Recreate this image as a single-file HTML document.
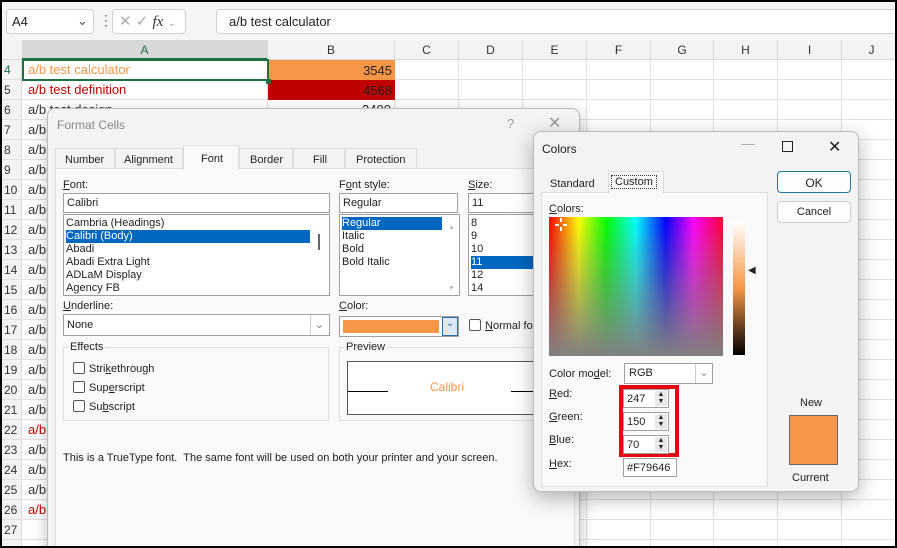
<!DOCTYPE html>
<html><head><style>
*{box-sizing:border-box;margin:0;padding:0}
body{width:897px;height:548px;overflow:hidden;background:#000;font-family:"Liberation Sans",sans-serif;font-size:12px;color:#222;position:relative}
.a{position:absolute}
#frame{left:2px;top:2px;width:893px;height:544px;background:#fff;overflow:hidden}
.u{text-decoration:underline}
.inp{position:absolute;background:#fff;border:1px solid #a0a0a0;padding:1px 3px;font-size:11px;white-space:nowrap;overflow:hidden}
.lbl{position:absolute;font-size:11px}
.cb{position:absolute;width:12px;height:12px;border:1px solid #555;border-radius:2px;background:#fff}
</style></head><body>
<div id="frame" class="a">
<div class="a" style="left:0;top:0;width:893px;height:38px;background:#f5f5f5"></div>
<div class="a" style="left:4px;top:7px;width:88px;height:25px;background:#fff;border:1px solid #d0d0d0;border-radius:4px;font-size:13px;padding:4px 5px">A4<span class="a" style="left:70px;top:3px;color:#555">⌄</span></div>
<div class="a" style="left:97px;top:10px;color:#666;font-size:14px">⋮</div>
<div class="a" style="top:7px;width:74px;height:25px;background:#fff;border:1px solid #d0d0d0;border-radius:4px;left:110px;color:#aaa;font-size:15px;padding:2px 6px">✕ ✓ <i style="font-family:'Liberation Serif';color:#333">fx</i> <span style="font-size:10px">⌄</span></div>
<div class="a" style="top:7px;width:690px;height:25px;background:#fff;border:1px solid #d0d0d0;border-radius:4px;font-size:13px;padding:4px 12px;color:#222;left:214px">a/b test calculator</div>
<div class="a" style="left:0;top:38px;width:893px;height:20px;background:#f3f3f3;border-bottom:1px solid #d8d8d8"></div>
<div class="a" style="left:20px;top:38px;width:246px;height:20px;background:#d8d8d8;border-bottom:2px solid #1e7145"></div>
<div class="a" style="left:0;top:58px;width:20px;height:490px;background:#f3f3f3;border-right:1px solid #d8d8d8"></div>
<div id="grid"></div>
<div class="a" style="left:266px;top:58px;width:127px;height:20px;background:#f79646;text-align:right;padding:3px 3px;font-size:13px">3545</div>
<div class="a" style="left:266px;top:78px;width:127px;height:20px;background:#c00000;text-align:right;padding:3px 3px;font-size:13px">4568</div>
<div class="a" style="left:20px;top:57px;width:247px;height:22px;border:2px solid #1e7145"></div>
<div class="a" style="left:264px;top:77px;width:5px;height:5px;background:#1e7145"></div>

<div class="a" style="left:45px;top:106px;width:533px;height:445px;background:#f3f3f3;border:1px solid #bbb;border-radius:8px;box-shadow:0 4px 16px rgba(0,0,0,.25)"></div>
<div class="a" style="left:55px;top:116px;color:#888;font-size:12px">Format Cells</div>
<div class="a" style="left:505px;top:114px;color:#999;font-size:13px">?</div>
<div class="a" style="left:546px;top:111px;color:#999;font-size:16px">✕</div>
<div class="a" style="left:53px;top:166px;width:520px;height:390px;background:#f9f9f9;border:1px solid #ddd"></div>
<div class="a" style="left:53px;top:146px;width:60px;height:21px;border:1px solid #ddd;border-bottom:none;font-size:11px;padding:5px 0 0 9px">Number</div>
<div class="a" style="left:113px;top:146px;width:68px;height:21px;border:1px solid #ddd;border-bottom:none;font-size:11px;padding:5px 0 0 8px">Alignment</div>
<div class="a" style="left:181px;top:143px;width:56px;height:25px;border:1px solid #ddd;border-bottom:none;background:#f9f9f9;font-size:11px;padding:7px 0 0 17px">Font</div>
<div class="a" style="left:237px;top:146px;width:54px;height:21px;border:1px solid #ddd;border-bottom:none;font-size:11px;padding:5px 0 0 10px">Border</div>
<div class="a" style="left:291px;top:146px;width:52px;height:21px;border:1px solid #ddd;border-bottom:none;font-size:11px;padding:5px 0 0 19px">Fill</div>
<div class="a" style="left:343px;top:146px;width:72px;height:21px;border:1px solid #ddd;border-bottom:none;font-size:11px;padding:5px 0 0 10px">Protection</div>

<div class="lbl" style="left:61px;top:177px"><span class="u">F</span>ont:</div>
<div class="inp" style="left:61px;top:191px;width:267px;height:20px;padding-top:3px">Calibri</div>
<div class="inp" style="left:61px;top:212px;width:267px;height:82px;padding:2px;line-height:13px">
Cambria (Headings)<br><span style="display:block;background:#0067c0;color:#fff;width:244px">Calibri (Body)</span>Abadi<br>Abadi Extra Light<br>ADLaM Display<br>Agency FB</div>
<div class="a" style="left:316px;top:232px;width:2px;height:16px;background:#666"></div>
<div class="lbl" style="left:337px;top:177px">F<span class="u">o</span>nt style:</div>
<div class="inp" style="left:337px;top:191px;width:119px;height:20px;padding-top:3px">Regular</div>
<div class="inp" style="left:337px;top:212px;width:121px;height:82px;padding:2px;line-height:13px"><span style="display:block;background:#0067c0;color:#fff;width:100px">Regular</span>Italic<br>Bold<br>Bold Italic</div>
<div class="a" style="left:446px;top:222px;color:#bbb;font-size:7px">▲</div><div class="a" style="left:446px;top:283px;color:#bbb;font-size:7px">▼</div>
<div class="lbl" style="left:466px;top:177px"><span class="u">S</span>ize:</div>
<div class="inp" style="left:466px;top:191px;width:70px;height:20px;padding-top:3px">11</div>
<div class="inp" style="left:466px;top:212px;width:70px;height:82px;padding:2px 2px;line-height:13px">8<br>9<br>10<br><span style="display:block;background:#0067c0;color:#fff">11</span>12<br>14</div>
<div class="lbl" style="left:61px;top:298px"><span class="u">U</span>nderline:</div>
<div class="inp" style="left:61px;top:312px;width:267px;height:22px;padding:4px 3px">None<span class="a" style="left:246px;top:0;width:18px;height:20px;border-left:1px solid #ccc;color:#777;text-align:center;padding-top:3px">⌄</span></div>
<div class="lbl" style="left:337px;top:298px"><span class="u">C</span>olor:</div>
<div class="inp" style="left:337px;top:314px;width:120px;height:21px"></div>
<div class="a" style="left:341px;top:318px;width:96px;height:13px;background:#f79646"></div>
<div class="a" style="left:440px;top:315px;width:16px;height:19px;background:#dce8f5;border:1px solid #2c6fb0;color:#2c6fb0;font-size:10px;text-align:center">⌄</div>
<div class="cb" style="left:467px;top:317px"></div>
<div class="lbl" style="left:483px;top:318px"><span class="u">N</span>ormal fo</div>
<div class="a" style="left:61px;top:345px;width:266px;height:74px;border:1px solid #ddd"></div>
<div class="lbl" style="left:66px;top:339px;background:#f9f9f9;padding:0 2px">Effects</div>
<div class="cb" style="left:71px;top:360px"></div><div class="lbl" style="left:87px;top:361px">Stri<span class="u">k</span>ethrough</div>
<div class="cb" style="left:71px;top:379px"></div><div class="lbl" style="left:87px;top:380px">Sup<span class="u">e</span>rscript</div>
<div class="cb" style="left:71px;top:398px"></div><div class="lbl" style="left:87px;top:399px">Su<span class="u">b</span>script</div>
<div class="a" style="left:337px;top:345px;width:200px;height:74px;border:1px solid #ddd"></div>
<div class="lbl" style="left:342px;top:339px;background:#f9f9f9;padding:0 2px">Preview</div>
<div class="a" style="left:345px;top:359px;width:190px;height:54px;background:#fff;border:1px solid #555"></div>
<div class="a" style="left:346px;top:389px;width:40px;height:1px;background:#000"></div>
<div class="a" style="left:509px;top:389px;width:30px;height:1px;background:#000"></div>
<div class="a" style="left:428px;top:378px;color:#f79646;font-size:12px">Calibri</div>
<div class="lbl" style="left:61px;top:450px">This is a TrueType font.&nbsp; The same font will be used on both your printer and your screen.</div>

<div class="a" style="left:531px;top:129px;width:326px;height:361px;background:#f3f3f3;border:1px solid #bbb;border-radius:8px;box-shadow:0 6px 20px rgba(0,0,0,.3)"></div>
<div class="a" style="left:540px;top:140px;font-size:12px">Colors</div>
<div class="a" style="left:739px;top:133px;color:#aaa;font-size:14px">—</div>
<div class="a" style="left:780px;top:139px;width:11px;height:11px;border:1.5px solid #222"></div>
<div class="a" style="left:826px;top:135px;font-size:16px">✕</div>
<div class="a" style="left:539px;top:190px;width:227px;height:295px;background:#f9f9f9;border:1px solid #ddd"></div>
<div class="lbl" style="left:548px;top:176px">Standard</div>
<div class="a" style="left:606px;top:169px;width:56px;height:22px;background:#f9f9f9;border:1px solid #ddd;border-bottom:none"></div>
<div class="lbl" style="left:609px;top:173px;border:1px dotted #333;padding:0 3px">Custom</div>
<div class="a" style="left:775px;top:169px;width:74px;height:22px;background:#fdfdfd;border:1px solid #1f7a9a;border-radius:4px;font-size:12px;text-align:center;padding-top:4px">OK</div>
<div class="a" style="left:775px;top:199px;width:74px;height:22px;background:#fdfdfd;border:1px solid #ccc;border-radius:4px;font-size:11px;text-align:center;padding-top:4px">Cancel</div>
<div class="lbl" style="left:547px;top:201px"><span class="u">C</span>olors:</div>
<div class="a" style="left:547px;top:215px;width:174px;height:139px;background:linear-gradient(to bottom,rgba(128,128,128,0),#808080),linear-gradient(to right,#f00,#ff0 17%,#0f0 33%,#0ff 50%,#00f 67%,#f0f 83%,#f03)"></div>
<div class="a" style="left:553px;top:222px;width:4px;height:2px;background:#fff"></div><div class="a" style="left:561px;top:222px;width:4px;height:2px;background:#fff"></div>
<div class="a" style="left:558px;top:216px;width:2px;height:4px;background:#fff"></div><div class="a" style="left:558px;top:225px;width:2px;height:4px;background:#fff"></div>
<div class="a" style="left:731px;top:219px;width:12px;height:134px;background:linear-gradient(#fff,#f79646 50%,#000)"></div>
<div class="a" style="left:746px;top:263px;font-size:10px">◀</div>
<div class="lbl" style="left:547px;top:366px">Color mo<span class="u">d</span>el:</div>
<div class="inp" style="left:622px;top:361px;width:89px;height:21px;padding:3px 4px">RGB<span class="a" style="left:70px;top:0;width:17px;height:19px;border-left:1px solid #ccc;color:#888;text-align:center;padding-top:2px">⌄</span></div>
<div class="a" style="left:617px;top:383px;width:60px;height:72px;border:4px solid #e30613"></div>
<div class="lbl" style="left:547px;top:386px"><span class="u">R</span>ed:</div>
<div class="lbl" style="left:547px;top:409px"><span class="u">G</span>reen:</div>
<div class="lbl" style="left:547px;top:432px"><span class="u">B</span>lue:</div>
<div class="lbl" style="left:547px;top:456px"><span class="u">H</span>ex:</div>
<div class="inp" style="left:621px;top:387px;width:46px;height:19px;padding-top:3px">247</div>
<div class="inp" style="left:621px;top:410px;width:46px;height:19px;padding-top:3px">150</div>
<div class="inp" style="left:621px;top:433px;width:46px;height:19px;padding-top:3px">70</div>
<div class="a" style="left:653px;top:389px;width:12px;height:15px;background:#e8e8e8;font-size:7px;line-height:7px;text-align:center">▲<br>▼</div>
<div class="a" style="left:653px;top:412px;width:12px;height:15px;background:#e8e8e8;font-size:7px;line-height:7px;text-align:center">▲<br>▼</div>
<div class="a" style="left:653px;top:435px;width:12px;height:15px;background:#e8e8e8;font-size:7px;line-height:7px;text-align:center">▲<br>▼</div>
<div class="inp" style="left:621px;top:456px;width:54px;height:19px;padding-top:3px">#F79646</div>
<div class="lbl" style="left:798px;top:395px">New</div>
<div class="a" style="left:787px;top:413px;width:49px;height:50px;background:#f79646;border:1px solid #666"></div>
<div class="lbl" style="left:790px;top:470px">Current</div>
</div>
<script>
var g=document.getElementById('grid'),h='';
var cx=[[20,266,'A'],[266,393,'B'],[393,457,'C'],[457,521,'D'],[521,585,'E'],[585,649,'F'],[649,712,'G'],[712,776,'H'],[776,840,'I'],[840,900,'J']];
cx.forEach(function(c){h+='<div class="a" style="left:'+c[0]+'px;top:38px;width:'+(c[1]-c[0])+'px;height:20px;border-right:1px solid #d8d8d8;text-align:center;font-size:12px;padding-top:3px;color:'+(c[2]=='A'?'#1e7145':'#333')+'">'+c[2]+'</div>';
h+='<div class="a" style="left:'+(c[1]-1)+'px;top:58px;width:1px;height:490px;background:#e0e0e0"></div>';});
for(var r=4;r<=27;r++){var y=58+(r-4)*20;
h+='<div class="a" style="left:0;top:'+y+'px;width:893px;height:20px;border-bottom:1px solid #e0e0e0"></div>';
h+='<div class="a" style="left:0;top:'+(y+3)+'px;width:20px;font-size:12px;color:'+(r==4?'#1e7145':'#333')+';padding-left:2px">'+r+'</div>';
var t=r==4?'<span style="color:#f79646">a/b test calculator</span>':r==5?'<span style="color:#c00000">a/b test definition</span>':r==27?'':'<span style="color:'+((r==22||r==26)?'#c00000':'#333')+'">a/b'+(r==6?' test design':'')+'</span>';
h+='<div class="a" style="left:26px;top:'+(y+2)+'px;font-size:13px">'+t+'</div>';}
h+='<div class="a" style="left:360px;top:100px;font-size:13px">3400</div>';
g.innerHTML=h;
</script>
</body></html>
